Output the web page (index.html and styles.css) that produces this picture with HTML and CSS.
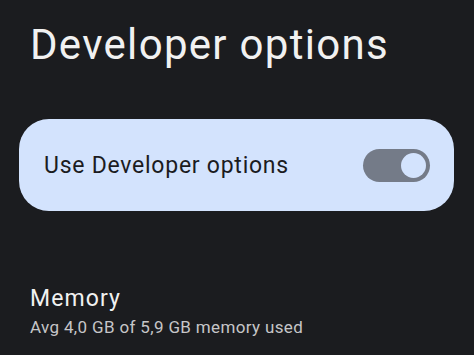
FILE: index.html
```html
<!DOCTYPE html>
<html>
<head>
<meta charset="utf-8">
<link rel="stylesheet" href="styles.css">
</head>
<body>
<div class="page">
  <h1 class="title">Developer options</h1>
  <div class="card">
    <span class="card-label">Use Developer options</span>
    <div class="switch"><div class="thumb"></div></div>
  </div>
  <div class="item">
    <div class="item-title">Memory</div>
    <div class="item-sub">Avg 4,0 GB of 5,9 GB memory used</div>
  </div>
</div>
</body>
</html>
```
FILE: styles.css
```css
html, body {
  margin: 0;
  padding: 0;
  background: #1b1c1f;
}
.page {
  width: 474px;
  height: 355px;
  overflow: hidden;
  display: flex;
  flex-direction: column;
  font-family: Roboto, "Liberation Sans", sans-serif;
}
.title {
  margin: 0;
  padding: 19px 0 0 30px;
  font-size: 42px;
  font-weight: 400;
  line-height: 52px;
  color: #f1f1f1;
  letter-spacing: 1.3px;
}
.card {
  margin: 48px 20px 0 19px;
  height: 92px;
  border-radius: 30px;
  background: #d3e3fd;
  display: flex;
  align-items: center;
  justify-content: space-between;
  padding: 0 24px 0 25px;
}
.card-label {
  font-size: 23px;
  color: #1b1c1f;
  letter-spacing: 0.75px;
}
.switch {
  width: 67px;
  height: 33px;
  border-radius: 17px;
  background: #747b88;
  display: flex;
  align-items: center;
  justify-content: flex-end;
  padding-right: 4px;
  box-sizing: border-box;
}
.thumb {
  width: 25px;
  height: 25px;
  border-radius: 50%;
  background: #d3e3fd;
}
.item {
  padding: 74px 0 0 30px;
}
.item-title {
  font-size: 23px;
  line-height: 28px;
  color: #f1f1f1;
  letter-spacing: 1.1px;
}
.item-sub {
  margin-top: 3px;
  font-size: 17px;
  line-height: 22px;
  color: #c6c6c8;
  letter-spacing: 0.35px;
}
```
